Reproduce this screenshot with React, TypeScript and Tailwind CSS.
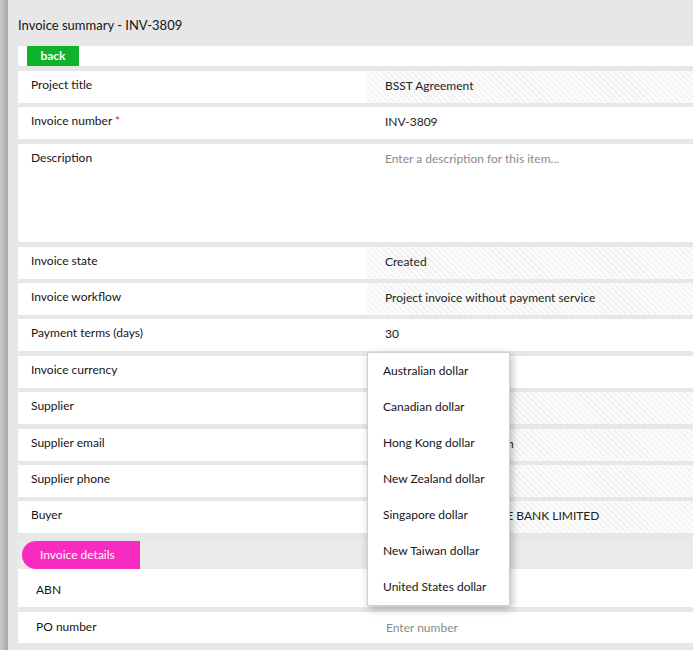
import React from "react";

type Row = {
  label: string;
  value?: React.ReactNode;
  placeholder?: string;
  readOnly?: boolean;
  required?: boolean;
  tall?: boolean;
};

const rows: Row[] = [
  { label: "Project title", value: "BSST Agreement", readOnly: true },
  { label: "Invoice number", value: "INV-3809", required: true },
  { label: "Description", placeholder: "Enter a description for this item...", tall: true },
  { label: "Invoice state", value: "Created", readOnly: true },
  { label: "Invoice workflow", value: "Project invoice without payment service", readOnly: true },
  { label: "Payment terms (days)", value: "30" },
  { label: "Invoice currency", value: "" },
  { label: "Supplier", value: "", readOnly: true },
  {
    label: "Supplier email",
    value: <span className="tracking-[-0.3px]">admin@bsstagreement.cn</span>,
    readOnly: true,
  },
  { label: "Supplier phone", value: "", readOnly: true },
  {
    label: "Buyer",
    value: (
      <>
        <span className="tracking-[-0.85px]">BENDIGO AND ADELAID</span>E BANK LIMITED
      </>
    ),
    readOnly: true,
  },
];

const currencies = [
  "Australian dollar",
  "Canadian dollar",
  "Hong Kong dollar",
  "New Zealand dollar",
  "Singapore dollar",
  "New Taiwan dollar",
  "United States dollar",
];

const striped =
  "bg-[repeating-linear-gradient(45deg,#fcfcfc_0px,#fcfcfc_2.4px,#f3f3f3_2.4px,#f3f3f3_4.2px)]";

const FieldRow = ({ row }: { row: Row }) => (
  <div className={`flex bg-white ${row.tall ? "h-[98.5px]" : "h-[32px]"}`}>
    <div className="w-[349px] shrink-0 pl-[13px] pt-[6px] leading-[16px] text-[#151515]">
      {row.label}
      {row.required && <span className="text-[#e8202a]"> *</span>}
    </div>
    <div
      className={`flex-1 pl-[18px] pt-[7px] leading-[16px] whitespace-nowrap overflow-hidden ${
        row.readOnly ? striped : ""
      }`}
    >
      {row.value ? (
        <span className="text-[#222]">{row.value}</span>
      ) : (
        <span className="text-[#8a8a8a]">{row.placeholder}</span>
      )}
    </div>
  </div>
);

export default function App() {
  return (
    <div
      className="flex min-h-[650px] bg-[#e7e7e7] text-[12px]"
      style={{ fontFamily: "Lato, 'Open Sans', sans-serif" }}
    >
      <div className="w-2 shrink-0 bg-linear-to-r from-[#cbcbcb] to-[#a7a7a7]" />
      <div className="relative flex-1 overflow-hidden pl-[10px]">
        <div className="flex h-[46px] items-center pt-[6px] text-[13px] text-[#151515]">
          Invoice summary - INV-3809
        </div>
        <div className="h-[20px] bg-white pl-[9px]">
          <button className="h-full w-[52px] bg-[#0cb32b] text-[12px] font-bold text-white">
            back
          </button>
        </div>

        <div className="mt-[5px] flex flex-col gap-[4.4px]">
          {rows.map((row) => (
            <FieldRow key={row.label} row={row} />
          ))}
        </div>

        <div className="mt-[7.5px]">
          <div className="flex h-[28px] bg-[#eaeaea] pl-[4px]">
            <div className="flex w-[118px] items-center rounded-l-full bg-[#f82bc1] pl-[18px] text-white">
              Invoice details
            </div>
          </div>
          <div className="flex h-[37.7px] bg-white">
            <div className="w-[349px] shrink-0 pl-[18px] pt-[13px] leading-[16px] text-[#151515]">
              ABN
            </div>
            <div className="flex-1" />
          </div>
          <div className="mt-[5px] flex h-[31.6px] bg-white">
            <div className="w-[349px] shrink-0 pl-[18px] pt-[7px] leading-[16px] text-[#151515]">
              PO number
            </div>
            <div className="flex-1 pl-[19px] pt-[8px] leading-[16px] text-[#8a8a8a]">
              Enter number
            </div>
          </div>
        </div>

        <div className="absolute left-[359px] top-[352px] w-[143px] border border-[#cfcfcf] bg-white shadow-[2px_3px_8px_rgba(0,0,0,0.28)]">
          {currencies.map((c) => (
            <div key={c} className="flex h-[36px] items-center pl-[15px] text-[#151515]">
              {c}
            </div>
          ))}
        </div>
      </div>
    </div>
  );
}
